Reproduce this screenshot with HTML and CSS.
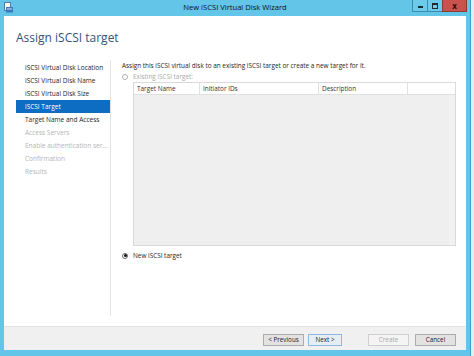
FILE: index.html
```
<!DOCTYPE html>
<html>
<head>
<meta charset="utf-8">
<link rel="stylesheet" href="styles.css">
</head>
<body>
<div class="window">
  <div class="titlebar">
    <svg class="app-icon" width="9" height="11" viewBox="0 0 9 11">
      <rect x="0.5" y="0.5" width="6" height="8" fill="#f4f8fb" stroke="#5a7a9a"/>
      <rect x="2" y="5" width="7" height="5.5" fill="#3b78c0"/>
      <rect x="3" y="6.5" width="5" height="1" fill="#cfe3f7"/>
    </svg>
    <div class="title">New iSCSI Virtual Disk Wizard</div>
    <div class="controls">
      <div class="ctl min"><span class="dash"></span></div>
      <div class="ctl max"><span class="box"></span></div>
      <div class="ctl close">x</div>
    </div>
  </div>
  <div class="client">
    <div class="content">
      <h1 class="heading">Assign iSCSI target</h1>
      <div class="body">
        <ul class="nav">
          <li>iSCSI Virtual Disk Location</li>
          <li>iSCSI Virtual Disk Name</li>
          <li>iSCSI Virtual Disk Size</li>
          <li class="active">iSCSI Target</li>
          <li>Target Name and Access</li>
          <li class="disabled">Access Servers</li>
          <li class="disabled">Enable authentication ser...</li>
          <li class="disabled">Confirmation</li>
          <li class="disabled">Results</li>
        </ul>
        <div class="main">
          <p class="intro">Assign this iSCSI virtual disk to an existing iSCSI target or create a new target for it.</p>
          <div class="radio disabled"><span class="circle"></span>Existing iSCSI target:</div>
          <div class="table">
            <div class="thead">
              <div class="th c1">Target Name</div>
              <div class="th c2">Initiator IDs</div>
              <div class="th c3">Description</div>
              <div class="th c4"></div>
            </div>
            <div class="tbody"></div>
          </div>
          <div class="radio checked"><span class="circle"><span class="dot"></span></span>New iSCSI target</div>
        </div>
      </div>
    </div>
    <div class="buttonbar">
      <button class="btn">&lt; Previous</button>
      <button class="btn default">Next &gt;</button>
      <button class="btn gap disabled">Create</button>
      <button class="btn">Cancel</button>
    </div>
  </div>
</div>
</body>
</html>
```
FILE: styles.css
```
html, body {
  margin: 0;
  padding: 0;
}
body {
  width: 474px;
  height: 356px;
  background: #e4eef2;
  font-family: "Open Sans", "Noto Sans", sans-serif;
  overflow: hidden;
}
.window {
  width: 471px;
  height: 356px;
  box-sizing: border-box;
  background: #63c5e7;
  border-right: 1px solid #3d9fc2;
  padding: 0 4px 6px 4px;
  display: flex;
  flex-direction: column;
}
.titlebar {
  height: 16px;
  display: flex;
  align-items: flex-start;
  position: relative;
}
.app-icon {
  margin-top: 2px;
}
.title {
  position: absolute;
  left: 0;
  right: 0;
  top: 2px;
  text-align: center;
  font-size: 7.6px;
  color: #111;
  line-height: 10px;
}
.controls {
  margin-left: auto;
  margin-right: -1px;
  display: flex;
  position: relative;
}
.ctl {
  height: 12px;
  box-sizing: border-box;
  border: 1px solid #3b8cab;
  border-top: none;
  display: flex;
  align-items: center;
  justify-content: center;
}
.min, .max {
  width: 15px;
  background: #6ccbea;
  border-right: none;
}
.dash {
  width: 5px;
  height: 2px;
  background: #1b2a33;
  margin-top: 3px;
}
.box {
  width: 4px;
  height: 3px;
  border: 1px solid #1b2a33;
  border-top-width: 2px;
}
.close {
  width: 25px;
  background: #c9524c;
  border-color: #8e3a36;
  color: #2a0b0a;
  font-size: 8px;
  font-weight: bold;
  line-height: 10px;
}
.client {
  flex: 1;
  display: flex;
  flex-direction: column;
  background: #fff;
}
.content {
  flex: 1;
  display: flex;
  flex-direction: column;
}
.heading {
  margin: 0;
  padding: 15px 0 0 12px;
  height: 30px;
  box-sizing: border-box;
  font-weight: 400;
  font-size: 12px;
  line-height: 14px;
  color: #34537a;
}
.body {
  flex: 1;
  display: flex;
  padding-top: 14px;
  padding-bottom: 10px;
}
.nav {
  list-style: none;
  margin: 0;
  padding: 1px 0 0 12px;
  width: 107px;
  box-sizing: border-box;
  border-right: 1px solid #e2e2e2;
}
.nav li {
  height: 13px;
  line-height: 13px;
  padding-left: 9px;
  font-size: 6.5px;
  color: #1e1e1e;
  white-space: nowrap;
}
.nav li.active {
  background: #0c6dc2;
  color: #fff;
}
.nav li.disabled {
  color: #b4b4b4;
}
.main {
  flex: 1;
  padding-left: 11px;
  padding-right: 10px;
}
.intro {
  margin: 0;
  height: 11px;
  line-height: 11px;
  font-size: 6.4px;
  color: #1e1e1e;
  white-space: nowrap;
}
.radio {
  display: flex;
  align-items: center;
  height: 11px;
  font-size: 6.4px;
  color: #1e1e1e;
  white-space: nowrap;
}
.radio.disabled {
  color: #a8a8a8;
}
.radio.checked {
  margin-top: 1px;
}
.circle {
  width: 6px;
  height: 6px;
  box-sizing: border-box;
  border: 1px solid #b0b0b0;
  border-radius: 50%;
  margin-right: 5px;
  display: flex;
  align-items: center;
  justify-content: center;
  background: #fff;
}
.radio.checked .circle {
  border-color: #6a6a6a;
}
.dot {
  width: 3px;
  height: 3px;
  border-radius: 50%;
  background: #111;
}
.table {
  margin-left: 11px;
  width: 323px;
  height: 164px;
  box-sizing: border-box;
  border: 1px solid #dadada;
  background: #efefef;
  display: flex;
  flex-direction: column;
  margin-bottom: 4px;
}
.thead {
  display: flex;
  height: 11px;
  background: #fff;
  border-bottom: 1px solid #e0e0e0;
}
.th {
  font-size: 6.4px;
  line-height: 11px;
  color: #333;
  padding-left: 3px;
  box-sizing: border-box;
  border-right: 1px solid #e0e0e0;
  white-space: nowrap;
}
.c1 { width: 66px; }
.c2 { width: 119px; }
.c3 { width: 89px; }
.c4 { flex: 1; border-right: none; }
.tbody {
  flex: 1;
  border-right: 6px solid #f2f2f2;
}
.buttonbar {
  height: 24px;
  background: #f0f0f0;
  border-top: 1px solid #e4e4e4;
  box-sizing: border-box;
  display: flex;
  align-items: center;
  padding-left: 259px;
  padding-top: 2px;
}
.btn {
  width: 41px;
  height: 12px;
  padding: 0;
  margin: 0 4px 0 0;
  font-family: inherit;
  font-size: 6.3px;
  line-height: 10px;
  color: #222;
  background: #e2e2e2;
  border: 1px solid #acacac;
  border-radius: 0;
}
.btn.default {
  width: 34px;
  background: #e5eef7;
  border-color: #8fb8e0;
}
.btn.gap {
  margin-left: 22px;
  margin-right: 6px;
}
.btn.disabled {
  background: #f4f4f4;
  border-color: #cfcfcf;
  color: #a9a9a9;
}
```
